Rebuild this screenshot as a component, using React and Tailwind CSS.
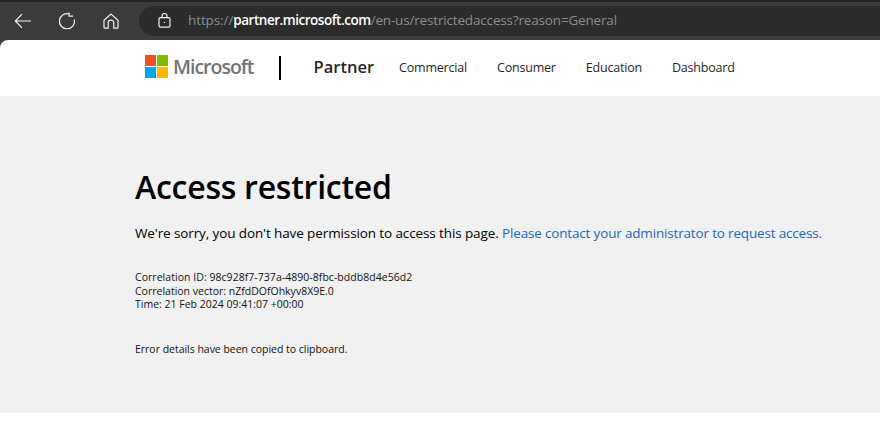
import React from 'react';

const font = { fontFamily: '"Open Sans", sans-serif' };

const navLinks = ['Commercial', 'Consumer', 'Education', 'Dashboard'];

const BackIcon = () => (
  <svg width="18" height="16" viewBox="0 0 18 16" fill="none" stroke="#f2f2f2" strokeWidth="1.2">
    <path d="M17 8H1.5M8 1.2L1.3 8l6.7 6.8" />
  </svg>
);

const ReloadIcon = () => (
  <svg width="18" height="18" viewBox="0 0 18 18" fill="none" stroke="#f2f2f2" strokeWidth="1.2">
    <path d="M11.5 2A7.6 7.6 0 1 0 16.4 7.5" />
    <path d="M11 .5v3.6h4.2" />
  </svg>
);

const HomeIcon = () => (
  <svg width="16" height="16" viewBox="0 0 16 16" fill="none" stroke="#f2f2f2" strokeWidth="1.2">
    <path d="M1 7.2L8 1l7 6.2v7.2a.8.8 0 0 1-.8.8h-3.4V10a2.8 2.8 0 0 0-5.6 0v5.2H1.8a.8.8 0 0 1-.8-.8z" />
  </svg>
);

const LockIcon = () => (
  <svg width="13" height="15" viewBox="0 0 13 15" fill="none" stroke="#f2f2f2" strokeWidth="1.2">
    <rect x="1" y="4.6" width="11" height="9.6" rx="1.4" />
    <path d="M4 4.6V3a2.5 2.5 0 0 1 5 0v1.6" />
    <circle cx="6.5" cy="9.4" r=".7" fill="#f2f2f2" stroke="none" />
  </svg>
);

const MsLogo = () => (
  <svg width="23" height="23" viewBox="0 0 23 23">
    <rect width="11" height="11" fill="#f25022" />
    <rect x="12" width="11" height="11" fill="#7fba00" />
    <rect y="12" width="11" height="11" fill="#00a4ef" />
    <rect x="12" y="12" width="11" height="11" fill="#ffb900" />
  </svg>
);

const App = () => {
  return (
    <div className="w-[880px] h-[439px] overflow-hidden bg-[#3b3b3b]" style={font}>
      <div className="h-[2px] bg-[#222222]" />
      <div className="h-[38px] flex items-center">
        <div className="w-[139px] flex items-center pl-[14px]">
          <BackIcon />
          <div className="ml-[26px]"><ReloadIcon /></div>
          <div className="ml-[27px]"><HomeIcon /></div>
        </div>
        <div className="flex-1 h-[30px] -mt-[1px] bg-[#2b2b2b] rounded-l-[15px] flex items-center pl-[19px]">
          <LockIcon />
          <div className="ml-[17px] text-[13.5px] tracking-[-0.1px] text-[#8f8f8f] whitespace-nowrap">
            https://<span className="text-white font-semibold tracking-[-0.47px]">partner.microsoft.com</span><span className="tracking-[-0.17px]">/en-us/restrictedaccess?reason=General</span>
          </div>
        </div>
      </div>

      <div className="h-[399px] bg-white rounded-tl-[8px] overflow-hidden">
        <header className="h-[56px] flex items-center pl-[145px]">
          <div className="-mt-[3px]"><MsLogo /></div>
          <span className="ml-[5px] -mt-[3px] text-[19.5px] font-semibold tracking-[-1px] text-[#737373]">Microsoft</span>
          <div className="ml-[25px] -mt-[1px] w-[2px] h-[24px] bg-black" />
          <span className="ml-[33px] -mt-[1px] text-[16.5px] font-semibold text-[#262626]">Partner</span>
          <nav className="flex ml-[25px] gap-[30px] text-[12.5px] tracking-[-0.2px] text-[#262626]">
            {navLinks.map((link) => (
              <a key={link} href="#">{link}</a>
            ))}
          </nav>
        </header>

        <main className="h-[317px] bg-[#f1f1f1] pl-[135px] pt-[69px]">
          <h1 className="text-[32px] leading-[44px] font-semibold text-black tracking-[-0.25px]">Access restricted</h1>
          <p className="mt-[14px] text-[13.5px] leading-[20px] tracking-[-0.11px] text-black whitespace-nowrap">
            We're sorry, you don't have permission to access this page.{' '}
            <a href="#" className="text-[#1e66b8] tracking-[-0.17px]">Please contact your administrator to request access.</a>
          </p>
          <div className="mt-[28px] text-[10.5px] leading-[13.5px] text-[#111111]">
            <div className="tracking-[0.04px]">Correlation ID: 98c928f7-737a-4890-8fbc-bddb8d4e56d2</div>
            <div>Correlation vector: nZfdDOfOhkyv8X9E.0</div>
            <div>Time: 21 Feb 2024 09:41:07 +00:00</div>
          </div>
          <div className="mt-[31px] text-[10.5px] leading-[13.5px] tracking-[-0.02px] text-[#111111]">Error details have been copied to clipboard.</div>
        </main>
      </div>
    </div>
  );
};

export default App;
